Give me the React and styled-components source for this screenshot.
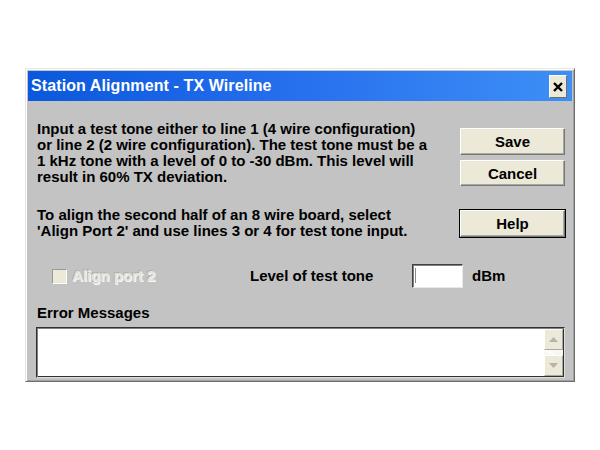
import React from 'react'
import styled, { createGlobalStyle } from 'styled-components'

const face = `#c3c3c3`
const cream = `#ece9d8`
const uiFont = `"Liberation Sans", Arial, sans-serif`

const GlobalStyle = createGlobalStyle`
    html, body {
        margin: 0;
        padding: 0;
        background: #ffffff;
    }
    body {
        font-family: ${uiFont};
    }
`

const Page = styled.div`
    width: 600px;
    height: 450px;
    padding-top: 68px;
    box-sizing: border-box;
`

const Dialog = styled.div`
    width: 550px;
    height: 314px;
    margin: 0 auto;
    box-sizing: border-box;
    background: ${face};
    border: 1px solid;
    border-color: #e6e6e6 #6e6e6e #6e6e6e #e6e6e6;
    box-shadow: inset 1px 1px #ffffff, inset -1px -1px #a0a0a0;
    padding: 2px;
    display: flex;
    flex-direction: column;
`

const TitleBar = styled.div`
    height: 30px;
    flex: none;
    display: flex;
    align-items: center;
    justify-content: space-between;
    padding: 0 5px 0 3px;
    background: linear-gradient(to right, #0a58dd 0%, #2770ee 50%, #3d8ff6 100%);
`

const Title = styled.span`
    color: #ffffff;
    font-weight: bold;
    font-size: 16px;
    letter-spacing: 0.1px;
`

const CloseButton = styled.button`
    width: 18px;
    height: 23px;
    padding: 0;
    margin-top: 1px;
    background: ${cream};
    border: 1px solid;
    border-color: #ffffff #6f6f6f #6f6f6f #ffffff;
    display: flex;
    align-items: center;
    justify-content: center;
`

const Body = styled.div`
    flex: 1;
    display: flex;
    flex-direction: column;
    padding: 20px 7px 0 9px;
    color: #000000;
    font-weight: bold;
    font-size: 15px;
    line-height: 16px;
`

const Top = styled.div`
    display: grid;
    grid-template-columns: 1fr 105px;
`

const Paragraph = styled.p`
    margin: ${p => (p.$gap ? '22px' : '0')} 0 0 0;
    white-space: pre;
`

const ButtonStack = styled.div`
    display: flex;
    flex-direction: column;
    padding-top: 7px;
`

const Button = styled.button`
    height: ${p => p.$h}px;
    margin-top: ${p => p.$mt || 0}px;
    padding: 0;
    box-sizing: border-box;
    font-family: ${uiFont};
    font-weight: bold;
    font-size: 15px;
    color: #000000;
    background: ${cream};
    border: 1px solid;
    border-color: #ffffff #777777 #777777 #ffffff;
    box-shadow: ${p => (p.$default ? '0 0 0 1px #000000, inset -1px -1px #a8a8a0' : 'inset -1px -1px #a8a8a0')};
`

const ControlsRow = styled.div`
    display: flex;
    align-items: center;
    height: 24px;
    margin-top: 25px;
`

const CheckLabel = styled.label`
    width: 198px;
    margin-left: 15px;
    display: flex;
    align-items: center;
    gap: 5px;
`

const CheckBox = styled.span`
    width: 15px;
    height: 15px;
    box-sizing: border-box;
    background: ${cream};
    border: 1px solid;
    border-color: #9a9a94 #ffffff #ffffff #9a9a94;
`

const DisabledText = styled.span`
    color: #e4e4dc;
    text-shadow: 1px 1px #f8f8f8, -1px -1px #b0b0b0;
`

const FieldLabel = styled.span`
    width: 162px;
`

const TextBox = styled.div`
    width: 51px;
    height: 24px;
    box-sizing: border-box;
    background: #ffffff;
    border: 1px solid;
    border-color: #404040 #e8e8e8 #e8e8e8 #404040;
    box-shadow: inset 1px 1px #808080;
    position: relative;
    &::before {
        content: '';
        position: absolute;
        left: 2px;
        top: 3px;
        width: 1px;
        height: 15px;
        background: #8a8a8a;
    }
`

const Unit = styled.span`
    margin-left: 9px;
`

const SectionLabel = styled.div`
    margin-top: 17px;
`

const MessageBox = styled.div`
    margin: 6px 0 0 -1px;
    height: 51px;
    box-sizing: border-box;
    background: #ffffff;
    border: 1px solid;
    border-color: #303030 #e0e0e0 #e0e0e0 #303030;
    box-shadow: inset 1px 1px #808080, inset -1px -1px #303030;
    display: flex;
    justify-content: flex-end;
    padding: 1px 1px 1px 0;
`

const ScrollBar = styled.div`
    width: 19px;
    display: grid;
    grid-template-rows: 21px 1fr 21px;
    background: repeating-linear-gradient(45deg, #f4f3ee 0 1px, #ffffff 1px 2px);
`

const ScrollButton = styled.div`
    background: ${cream};
    border: 1px solid;
    border-color: #ffffff #a8a8a0 #a8a8a0 #ffffff;
    display: flex;
    align-items: center;
    justify-content: center;
`

function Arrow({ down }) {
    return (
        <svg width="9" height="5" viewBox="0 0 9 5">
            <path d={down ? 'M0 0 H9 L4.5 5 Z' : 'M0 5 H9 L4.5 0 Z'} fill="#b4b4a8" />
        </svg>
    )
}

export default function App() {
    return (
        <Page>
            <GlobalStyle />
            <Dialog>
                <TitleBar>
                    <Title>Station Alignment - TX Wireline</Title>
                    <CloseButton aria-label="Close">
                        <svg width="10" height="10" viewBox="0 0 10 10">
                            <path d="M1 1 L9 9 M9 1 L1 9" stroke="#000" strokeWidth="2.4" />
                        </svg>
                    </CloseButton>
                </TitleBar>
                <Body>
                    <Top>
                        <div>
                            <Paragraph>
                                {`Input a test tone either to line 1 (4 wire configuration)
or line 2 (2 wire configuration). The test tone must be a
1 kHz tone with a level of 0 to -30 dBm. This level will
result in 60% TX deviation.`}
                            </Paragraph>
                            <Paragraph $gap>
                                {`To align the second half of an 8 wire board, select
'Align Port 2' and use lines 3 or 4 for test tone input.`}
                            </Paragraph>
                        </div>
                        <ButtonStack>
                            <Button $h={27}>Save</Button>
                            <Button $h={26} $mt={5}>Cancel</Button>
                            <Button $h={27} $mt={24} $default>Help</Button>
                        </ButtonStack>
                    </Top>
                    <ControlsRow>
                        <CheckLabel>
                            <CheckBox />
                            <DisabledText>Align port 2</DisabledText>
                        </CheckLabel>
                        <FieldLabel>Level of test tone</FieldLabel>
                        <TextBox />
                        <Unit>dBm</Unit>
                    </ControlsRow>
                    <SectionLabel>Error Messages</SectionLabel>
                    <MessageBox>
                        <ScrollBar>
                            <ScrollButton><Arrow /></ScrollButton>
                            <div />
                            <ScrollButton><Arrow down /></ScrollButton>
                        </ScrollBar>
                    </MessageBox>
                </Body>
            </Dialog>
        </Page>
    )
}
